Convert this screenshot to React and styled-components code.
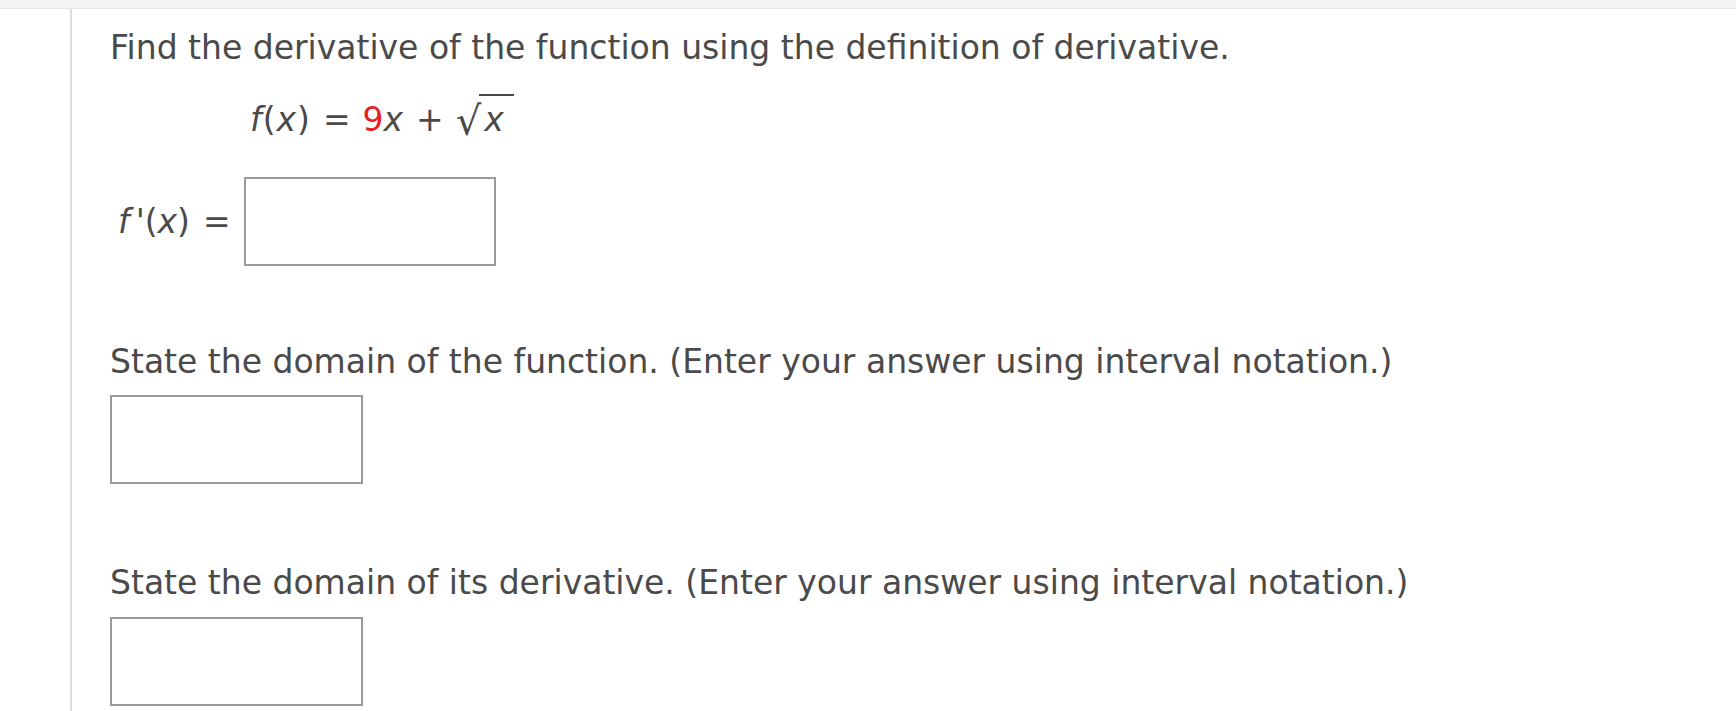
import React from "react";
import styled, { createGlobalStyle } from "styled-components";

const Global = createGlobalStyle`
  html, body { margin: 0; padding: 0; background: #ffffff; }
  body { font-family: "DejaVu Sans", Verdana, sans-serif; color: #4a4a4a; }
`;

const TopBar = styled.div`
  height: 8px;
  background: #f4f4f4;
  border-bottom: 1px solid #e6e6e6;
`;

const Main = styled.div`
  display: flex;
  min-height: 702px;
`;

const Gutter = styled.div`
  width: 70px;
  flex: none;
  border-right: 2px solid #dcdcdc;
`;

const Content = styled.div`
  flex: 1;
  padding: 19px 0 0 38px;
  font-size: 33px;
  line-height: 40px;
`;

const Prompt = styled.p`
  margin: ${(p) => p.$mt || 0}px 0 0 0;
`;

const MathLine = styled.div`
  display: flex;
  align-items: ${(p) => p.$align || "center"};
  margin: ${(p) => p.$mt || 0}px 0 0 ${(p) => p.$indent || 0}px;
  white-space: pre;
`;

const Var = styled.span`
  font-style: italic;
`;

const Paren = styled.span`
  margin: 0 1px;
`;

const Prime = styled.span`
  margin-left: 6px;
`;

const Op = styled.span`
  margin: 0 ${(p) => p.$r ?? 13}px 0 ${(p) => p.$l ?? 13}px;
`;

const Red = styled.span`
  color: #e8201f;
`;

const Radical = styled.span`
  display: inline-flex;
  align-items: flex-end;
`;

const RadSign = styled.span`
  font-size: 40px;
  line-height: 44px;
  position: relative;
  top: 3px;
`;

const Radicand = styled.span`
  border-top: 2px solid #4a4a4a;
  padding: 6px 10px 0 5px;
  line-height: 36px;
  font-style: italic;
  margin-left: -2px;
  margin-bottom: 2px;
`;

const AnswerBox = styled.div`
  width: ${(p) => p.$w || 249}px;
  height: 85px;
  border: 2px solid #9a9a9a;
  background: #fff;
  box-sizing: content-box;
  margin-top: ${(p) => p.$mt || 0}px;
`;

export default function App() {
  return (
    <>
      <Global />
      <TopBar />
      <Main>
        <Gutter />
        <Content>
          <Prompt>Find the derivative of the function using the definition of derivative.</Prompt>
          <MathLine $indent={140} $mt={26} $align="flex-end">
            <Var>f</Var><Paren>(</Paren><Var>x</Var><Paren>)</Paren><Op $l={12} $r={12}>=</Op><Red>9</Red><Var>x</Var><Op $l={13} $r={12}>+</Op>
            <Radical>
              <RadSign>√</RadSign>
              <Radicand>x</Radicand>
            </Radical>
          </MathLine>
          <MathLine $indent={8} $mt={37}>
            <Var>f</Var><Prime>'</Prime>(<Var>x</Var>)<Op>=</Op>
            <AnswerBox $w={248} />
          </MathLine>
          <Prompt $mt={76}>State the domain of the function. (Enter your answer using interval notation.)</Prompt>
          <AnswerBox $mt={13} />
          <Prompt $mt={79}>State the domain of its derivative. (Enter your answer using interval notation.)</Prompt>
          <AnswerBox $mt={14} />
        </Content>
      </Main>
    </>
  );
}
